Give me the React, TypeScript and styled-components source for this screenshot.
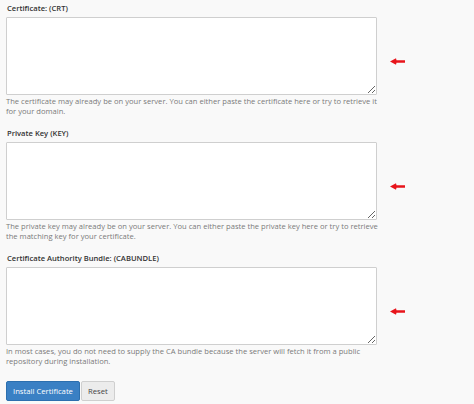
import styled, { createGlobalStyle } from 'styled-components';

const GlobalStyle = createGlobalStyle`
  html, body {
    margin: 0;
    padding: 0;
    background: #f9f9f9;
  }
  body {
    font-family: 'Open Sans', 'Liberation Sans', sans-serif;
    color: #333;
  }
`;

const sections = [
  {
    label: 'Certificate: (CRT)',
    help: 'The certificate may already be on your server. You can either paste the certificate here or try to retrieve it for your domain.',
  },
  {
    label: 'Private Key (KEY)',
    help: 'The private key may already be on your server. You can either paste the private key here or try to retrieve the matching key for your certificate.',
  },
  {
    label: 'Certificate Authority Bundle: (CABUNDLE)',
    help: 'In most cases, you do not need to supply the CA bundle because the server will fetch it from a public repository during installation.',
  },
];

const Arrow = () => (
  <svg width="15" height="7" viewBox="0 0 15 7">
    <path d="M0 3.5 L6 0.3 L6.5 2.2 L15 2.3 L15 4.7 L6.5 4.8 L6 6.7 Z" fill="#e8141b" />
  </svg>
);

const App = () => {
  return (
    <>
      <GlobalStyle />
      <Page>
        {sections.map((s) => (
          <Section key={s.label}>
            <Label>{s.label}</Label>
            <FieldRow>
              <Field />
              <Marker>
                <Arrow />
              </Marker>
            </FieldRow>
            <Help>{s.help}</Help>
          </Section>
        ))}
        <Actions>
          <Button $primary>Install Certificate</Button>
          <Button>Reset</Button>
        </Actions>
      </Page>
    </>
  );
};

const Page = styled.div`
  padding: 3px 0 0 6px;
  width: 372px;
`;

const Section = styled.div`
  margin-bottom: 12px;
`;

const Label = styled.div`
  font-size: 7.6px;
  font-weight: 600;
  line-height: 10px;
  color: #333;
  padding-left: 1px;
  margin-bottom: 4px;
`;

const FieldRow = styled.div`
  display: flex;
  align-items: center;
`;

const Field = styled.textarea`
  flex: none;
  width: 371px;
  height: 78px;
  box-sizing: border-box;
  background: #fff;
  border: 1px solid #cfcfcf;
  border-radius: 1px;
  margin: 0;
  padding: 2px;
`;

const Marker = styled.div`
  display: flex;
  margin-left: 13px;
  padding-top: 10px;
`;

const Help = styled.p`
  margin: 2px 0 0;
  font-size: 7.6px;
  line-height: 9.5px;
  color: #7a7a7a;
  width: 374px;
`;

const Actions = styled.div`
  display: flex;
  gap: 1px;
  margin-top: 15px;
`;

const Button = styled.button<{ $primary?: boolean }>`
  height: 20px;
  padding: 0 6px;
  font-family: 'Open Sans', 'Liberation Sans', sans-serif;
  font-size: 7.7px;
  border-radius: 2px;
  border: 1px solid ${(p) => (p.$primary ? '#2c6fae' : '#cfcfcf')};
  background: ${(p) => (p.$primary ? '#3a80c4' : '#ececec')};
  color: ${(p) => (p.$primary ? '#fff' : '#444')};
  cursor: pointer;
`;

export default App;
